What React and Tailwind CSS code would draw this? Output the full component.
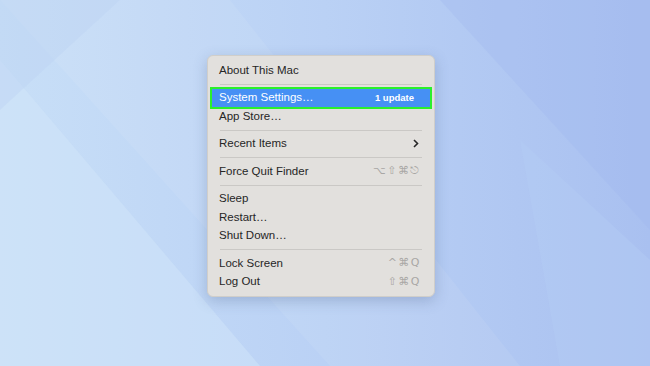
import React from 'react';

const Separator = () => (
  <div className="flex h-[9.4px] items-center px-3">
    <div className="h-px w-full bg-[#cac8c5]" />
  </div>
);

const Row = ({ label, shortcut, chevron }) => (
  <div className="flex h-[18.6px] items-center justify-between pl-[11px] pr-[13px] text-[#262626]">
    <span>{label}</span>
    {shortcut && (
      <span className="font-['DejaVu_Sans',sans-serif] text-[11px] tracking-[1.5px] text-[#a9a7a5]">{shortcut}</span>
    )}
    {chevron && (
      <svg width="6" height="9" viewBox="0 0 6 9" className="mr-[2px]">
        <path d="M1 1l3.5 3.5L1 8" fill="none" stroke="#262626" strokeWidth="1.6" />
      </svg>
    )}
  </div>
);

const Wallpaper = () => (
  <svg className="absolute inset-0 h-full w-full" viewBox="0 0 650 366" preserveAspectRatio="none">
    <polygon points="0,60 260,366 0,366" fill="#d2e6fa" opacity="0.5" />
    <polygon points="0,0 230,0 520,366 330,366" fill="#ffffff" opacity="0.07" />
    <polygon points="440,0 650,0 650,230" fill="#9fb7ee" opacity="0.3" />
    <polygon points="520,140 650,260 650,366 560,366" fill="#b4cbf4" opacity="0.45" />
    <polygon points="0,0 120,0 0,110" fill="#bcd3f2" opacity="0.4" />
  </svg>
);

export default function App() {
  return (
    <div className="relative flex h-[366px] w-[650px] overflow-hidden bg-gradient-to-r from-[#c8dff7] via-[#bad1f5] to-[#a9c0f0] font-['Liberation_Sans',Arial,sans-serif] text-[11.5px]">
      <Wallpaper />
      <div className="relative ml-[207px] mt-[55px] flex h-[242px] w-[228px] flex-col rounded-[6px] border border-[#d0ceca] bg-[#e2e0dd] py-[5px] shadow-[0_4px_14px_rgba(60,80,120,0.25)]">
        <Row label="About This Mac" />
        <Separator />
        <div className="mx-[4px] flex h-[18.6px] items-center justify-between bg-[#4690f4] pl-[7px] pr-[16px] text-white outline-2 outline-[#2bf02b]">
          <span>System Settings…</span>
          <span className="text-[9.5px] font-bold">1 update</span>
        </div>
        <Row label="App Store…" />
        <Separator />
        <Row label="Recent Items" chevron />
        <Separator />
        <Row label="Force Quit Finder" shortcut="⌥⇧⌘⎋" />
        <Separator />
        <Row label="Sleep" />
        <Row label="Restart…" />
        <Row label="Shut Down…" />
        <Separator />
        <Row label="Lock Screen" shortcut="^⌘Q" />
        <Row label="Log Out" shortcut="⇧⌘Q" />
      </div>
    </div>
  );
}
